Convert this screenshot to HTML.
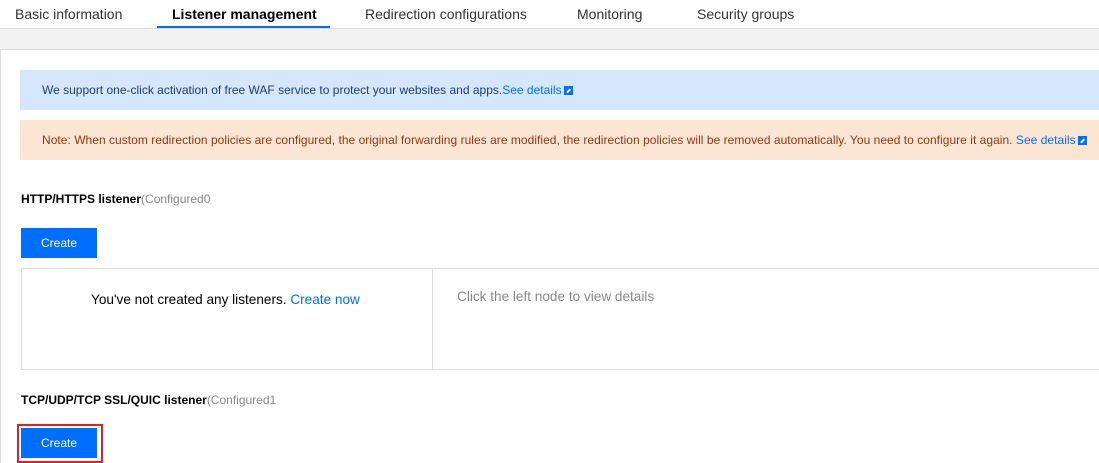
<!DOCTYPE html>
<html><head><meta charset="utf-8"><style>
*{margin:0;padding:0;box-sizing:border-box}
body{width:1099px;height:463px;overflow:hidden;background:#f2f2f2;font-family:"Liberation Sans",Arial,sans-serif;position:relative}
.tabs{position:absolute;left:0;top:0;width:1099px;height:29px;background:#fff;border-bottom:1px solid #ddd}
.tab{position:absolute;top:6px;font-size:14px;color:#333}
.act{font-weight:bold;color:#000}
.ul{position:absolute;left:157px;top:26px;width:173px;height:2px;background:#006eff}
.panel{position:absolute;left:0;top:49px;width:1099px;height:414px;background:#fff;border-left:1px solid #ddd;border-top:1px solid #ddd}
.ban{position:absolute;left:20px;width:1079px;height:40px;font-size:12px;line-height:40px;padding-left:22px;white-space:nowrap}
.lnk{color:#006eff}
.ic{display:inline-block;width:9px;height:9px;background:#006eff;vertical-align:-1px;margin-left:2px;position:relative}
.ic:after{content:"";position:absolute;left:2px;top:4px;width:5px;height:1.5px;background:#fff;transform:rotate(-45deg)}
.h{position:absolute;left:21px;font-size:12px;font-weight:bold;color:#000}
.h span{font-weight:normal;color:#888}
.btn{position:absolute;left:21px;width:76px;height:30px;background:#006eff;color:#fff;font-size:12px;text-align:center;line-height:30px}
</style></head><body>
<div class="tabs">
<div class="tab" style="left:15px">Basic information</div>
<div class="tab act" style="left:172px">Listener management</div>
<div class="tab" style="left:365px">Redirection configurations</div>
<div class="tab" style="left:577px">Monitoring</div>
<div class="tab" style="left:697px">Security groups</div>
<div class="ul"></div>
</div>
<div class="panel"></div>
<div class="ban" style="top:70px;background:#d5e7fd;color:#1e3d6e">We support one-click activation of free WAF service to protect your websites and apps.<span class="lnk">See details</span><span class="ic"></span></div>
<div class="ban" style="top:120px;background:#fde5d3;color:#8a3a14;letter-spacing:0.03px">Note: When custom redirection policies are configured, the original forwarding rules are modified, the redirection policies will be removed automatically. You need to configure it again. <span class="lnk">See details</span><span class="ic"></span></div>
<div class="h" style="top:192px">HTTP/HTTPS listener<span>(Configured0</span></div>
<div class="btn" style="top:228px">Create</div>
<div style="position:absolute;left:21px;top:268px;width:1078px;height:102px;border:1px solid #ddd;border-right:none"></div>
<div style="position:absolute;left:432px;top:268px;width:1px;height:102px;background:#ddd"></div>
<div style="position:absolute;left:91px;top:292px;font-size:13.6px;color:#000">You've not created any listeners. <span class="lnk">Create now</span></div>
<div style="position:absolute;left:457px;top:289px;font-size:13.6px;color:#888">Click the left node to view details</div>
<div class="h" style="top:393px">TCP/UDP/TCP SSL/QUIC listener<span>(Configured1</span></div>
<div style="position:absolute;left:17px;top:424px;width:86px;height:39px;border:2px solid #e0202a"></div>
<div class="btn" style="top:428px">Create</div>
</body></html>
